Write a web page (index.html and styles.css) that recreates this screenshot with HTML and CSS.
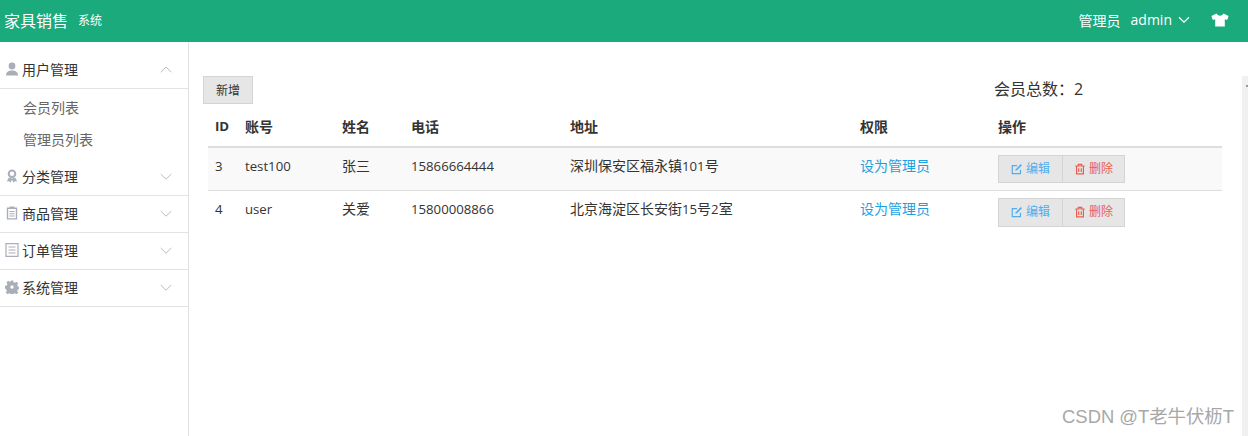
FILE: index.html
```html
<!DOCTYPE html>
<html lang="zh-CN">
<head>
<meta charset="utf-8">
<title>家具销售系统</title>
<link rel="stylesheet" href="styles.css">
</head>
<body>
<header class="topbar">
  <div class="brand"><span class="brand-name">家具销售</span><span class="brand-sub">系统</span></div>
  <div class="user">
    <span class="role">管理员</span>
    <span class="uname">admin</span>
    <svg class="caret" viewBox="0 0 12 8"><path d="M1 1.200 6 6.200l5-5" /></svg>
    <svg class="shirt" viewBox="0 0 18 14"><path d="M5.600.6 0.400 3l1.400 4 2.400-.7V13.600h9.600V6.300l2.400.7 1.400-4L12.400.6C11.600 2.200 10.400 2.800 9 2.800S6.400 2.200 5.600.6z"/></svg>
  </div>
</header>
<div class="body">
  <aside class="side">
    <ul class="menu">
      <li class="group">
        <div class="title">
          <svg class="ico" viewBox="0 0 14 14"><circle cx="7" cy="4" r="3.400"/><path d="M1 13.600c0-3.600 2.200-5.200 6-5.200s6 1.600 6 5.200z"/></svg>
          <span>用户管理</span>
          <svg class="arrow" viewBox="0 0 12 7"><path d="M.7 6.200 6 1l5.300 5.200"/></svg>
        </div>
        <ul class="sub"><li>会员列表</li><li>管理员列表</li></ul>
      </li>
      <li class="group">
        <div class="title">
          <svg class="ico" viewBox="0 0 14 14"><path fill-rule="evenodd" d="M7 .5a4.300 4.300 0 1 1 0 8.600A4.300 4.300 0 0 1 7 .5zM7 2.500a2.300 2.300 0 1 0 0 4.600 2.300 2.300 0 0 0 0-4.600z"/><path d="M3.800 8.400 1.800 12.400l2.400-.2L5.600 13.800 7 10.600l1.400 3.200 1.400-1.600 2.400.2-2-4-3.200 1.200z"/></svg>
          <span>分类管理</span>
          <svg class="arrow" viewBox="0 0 12 7"><path d="M.7 1 6 6.200 11.300 1"/></svg>
        </div>
      </li>
      <li class="group">
        <div class="title">
          <svg class="ico" viewBox="0 0 14 14"><path fill-rule="evenodd" d="M4.600 1.400V.4h4.800v1h2.800v12.200H1.800V1.400zM3.200 3v9.200h7.600V3zM4.400 5h5.200v1.100H4.400zM4.400 7.200h5.200v1.100H4.400zM4.400 9.400h5.200v1.100H4.400z"/></svg>
          <span>商品管理</span>
          <svg class="arrow" viewBox="0 0 12 7"><path d="M.7 1 6 6.200 11.300 1"/></svg>
        </div>
      </li>
      <li class="group">
        <div class="title">
          <svg class="ico" viewBox="0 0 14 14"><path class="line" d="M1 .6h12v12.800H1zM3.500 4h7M3.500 7h7M3.500 10h7"/></svg>
          <span>订单管理</span>
          <svg class="arrow" viewBox="0 0 12 7"><path d="M.7 1 6 6.200 11.300 1"/></svg>
        </div>
      </li>
      <li class="group">
        <div class="title">
          <svg class="ico" viewBox="0 0 14 14"><path fill-rule="evenodd" d="M5.800.4h2.400l.4 1.800 1.300.6 1.600-1 1.700 1.700-1 1.600.6 1.300 1.800.4v2.400l-1.800.4-.6 1.300 1 1.600-1.700 1.700-1.600-1-1.300.6-.4 1.800H5.800l-.4-1.800-1.300-.6-1.600 1-1.700-1.700 1-1.600-.6-1.300L0 8.200V5.800l1.800-.4.6-1.300-1-1.600 1.700-1.700 1.600 1 1.300-.6zM7 5.300a1.700 1.700 0 1 0 0 3.400 1.700 1.700 0 0 0 0-3.400z"/></svg>
          <span>系统管理</span>
          <svg class="arrow" viewBox="0 0 12 7"><path d="M.7 1 6 6.200 11.300 1"/></svg>
        </div>
      </li>
    </ul>
  </aside>
  <main class="main">
    <div class="content">
      <div class="toolbar">
        <button class="btn" type="button">新增</button>
        <span class="total">会员总数：2</span>
      </div>
      <table class="grid">
        <colgroup>
          <col class="c-id"><col class="c-acc"><col class="c-name"><col class="c-tel"><col class="c-addr"><col class="c-perm"><col class="c-op">
        </colgroup>
        <thead>
          <tr><th><span class="lat">ID</span></th><th>账号</th><th>姓名</th><th>电话</th><th>地址</th><th>权限</th><th>操作</th></tr>
        </thead>
        <tbody>
          <tr class="odd">
            <td><span class="lat">3</span></td><td><span class="lat">test100</span></td><td>张三</td><td><span class="lat">15866664444</span></td><td>深圳保安区福永镇<span class="lat">101</span>号</td>
            <td><a class="link">设为管理员</a></td>
            <td class="ops">
              <div class="btn-group">
                <span class="op edit"><svg viewBox="0 0 14 14"><path d="M11 8v4.500H1.500V3H7"/><path d="M5.500 7.200 11.400 1.300l1.400 1.400L7 8.600l-1.800.3z" class="solid"/></svg>编辑</span>
                <span class="op del"><svg viewBox="0 0 14 14"><path d="M1.500 3.500h11M5 3.500V1.500h4v2M3 3.500V12.800h8V3.500M5.500 6v4.500M8.500 6v4.500"/></svg>删除</span>
              </div>
            </td>
          </tr>
          <tr>
            <td><span class="lat">4</span></td><td><span class="lat">user</span></td><td>关爱</td><td><span class="lat">15800008866</span></td><td>北京海淀区长安街<span class="lat">15</span>号<span class="lat">2</span>室</td>
            <td><a class="link">设为管理员</a></td>
            <td class="ops">
              <div class="btn-group">
                <span class="op edit"><svg viewBox="0 0 14 14"><path d="M11 8v4.500H1.500V3H7"/><path d="M5.500 7.200 11.400 1.300l1.400 1.400L7 8.600l-1.800.3z" class="solid"/></svg>编辑</span>
                <span class="op del"><svg viewBox="0 0 14 14"><path d="M1.500 3.500h11M5 3.500V1.500h4v2M3 3.500V12.800h8V3.500M5.500 6v4.500M8.500 6v4.500"/></svg>删除</span>
              </div>
            </td>
          </tr>
        </tbody>
      </table>
    </div>
    <div class="track"></div>
  </main>
</div>
<div class="watermark">CSDN @T老牛伏枥T</div>
</body>
</html>
```
FILE: styles.css
```css
* { box-sizing: border-box; }
html, body { height: 100%; }
body {
  margin: 0;
  height: 436px;
  overflow: hidden;
  background: #fff;
  color: #333;
  font-family: "Open Sans", "Noto Sans CJK SC", sans-serif;
  font-size: 14px;
  position: relative;
}
ul { list-style: none; margin: 0; padding: 0; }
.lat { font-size: 13.2px; }

.topbar {
  height: 42px;
  background: #1aaa7c;
  color: #fff;
  display: flex;
  align-items: center;
  justify-content: space-between;
  padding: 0 19px 3px 4px;
}
.brand { display: flex; align-items: center; }
.brand-name { font-size: 16px; }
.brand-sub { font-size: 12px; margin-left: 10px; }
.user { display: flex; align-items: center; font-size: 14px; }
.uname { margin-left: 10px; }
.caret { width: 12px; height: 8px; margin-left: 6px; fill: none; stroke: #fff; stroke-width: 1.300; }
.shirt { width: 18px; height: 14px; margin-left: 21px; fill: #fff; }

.body { display: flex; height: 394px; }
.side {
  width: 189px;
  flex: none;
  border-right: 1px solid #e2e2e2;
  padding-top: 10px;
}
.title {
  height: 37px;
  border-bottom: 1px solid #e2e2e2;
  display: flex;
  align-items: center;
  padding: 0 16px 2px 5px;
  color: #333;
}
.title span { flex: 1; margin-left: 3px; }
.ico {
  width: 14px;
  height: 14px;
  flex: none;
  fill: #a9aeb8;
  stroke: #a9aeb8;
  stroke-width: 0;
}
.ico .line { fill: none; stroke-width: 1.200; }
.arrow { width: 12px; height: 7px; fill: none; stroke: #b8bcc2; stroke-width: 1; flex: none; }
.sub { padding: 3px 0; }
.sub li { height: 32px; line-height: 31px; padding-left: 23px; color: #666; }

.main { flex: 1; display: flex; min-width: 0; }
.content { flex: 1; padding: 34px 20px 0 14px; min-width: 0; }
.track { width: 6px; margin-top: 34px; padding: 9px 0 0 4px; background: #f1f1f1; flex: none; }
.track::before { content: ""; display: block; width: 2px; height: 2px; background: #999; }
.toolbar { display: flex; align-items: flex-start; height: 33px; }
.btn {
  width: 50px;
  height: 28px;
  padding: 0;
  background: #e6e6e6;
  border: 1px solid #d4d4d4;
  color: #333;
  font: inherit;
  font-size: 12px;
}
.total {
  margin-left: 741px;
  margin-top: 2px;
  font-size: 16px;
  line-height: 22px;
  color: #333;
}
.grid {
  width: 1014px;
  margin-left: 5px;
  border-collapse: collapse;
  table-layout: fixed;
}
.c-id { width: 30px; }
.c-acc { width: 97px; }
.c-name { width: 69px; }
.c-tel { width: 159px; }
.c-addr { width: 290px; }
.c-perm { width: 138px; }
.c-op { width: 231px; }
.grid th {
  height: 38px;
  padding: 0 7px 4px;
  text-align: left;
  font-weight: 700;
  color: #333;
  border-bottom: 2px solid #ddd;
}
.grid td {
  height: 43px;
  padding: 8px 7px 0;
  vertical-align: top;
  line-height: 20px;
  border-bottom: 1px solid #ddd;
}
.grid tbody tr:last-child td { border-bottom: 0; }
.odd td { background: #f9f9f9; }
.link { color: #1e9fe0; }
.grid .ops { padding-top: 7px; }
.btn-group { display: flex; width: 127px; height: 29px; background: #e6e6e6; border: 1px solid #d4d4d4; font-size: 12px; }
.odd .btn-group { height: 28px; }
.op { display: flex; align-items: center; justify-content: center; }
.edit { width: 63px; color: #4fadf0; }
.del { width: 62px; color: #e8604f; }
.op + .op { border-left: 1px solid #d4d4d4; }
.op svg { width: 12px; height: 12px; margin-right: 3px; fill: none; stroke-width: 1.400; stroke: currentColor; }
.op .solid { fill: currentColor; stroke: none; }

.watermark {
  position: absolute;
  right: 14px;
  bottom: 8px;
  font-family: "Liberation Sans", "Noto Sans CJK SC", sans-serif;
  font-size: 18.4px;
  color: #a8a8a8;
}
```
